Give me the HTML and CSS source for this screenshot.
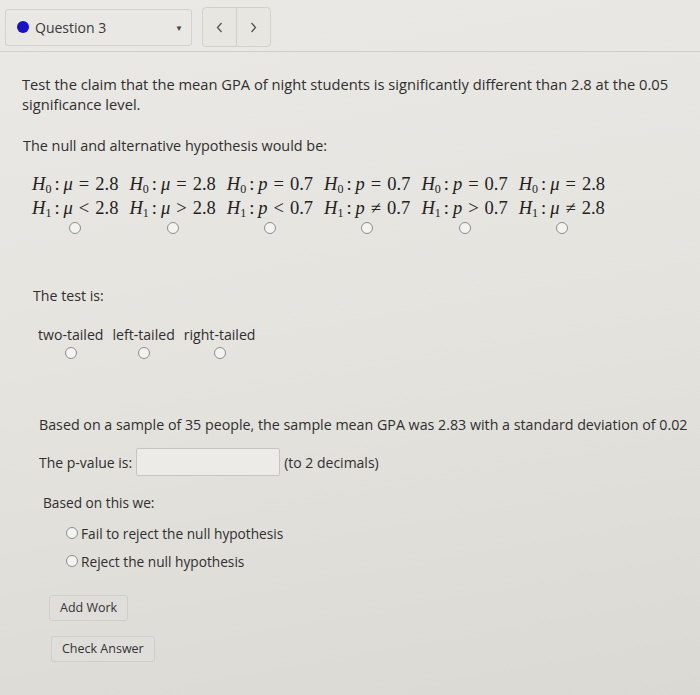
FILE: index.html
```html
<!DOCTYPE html>
<html>
<head>
<meta charset="utf-8">
<link rel="stylesheet" href="styles.css">
</head>
<body>
<div class="page">
  <div class="header">
    <div class="qselect">
      <span class="dot"></span>
      <span class="qlabel">Question 3</span>
      <span class="caret">&#9660;</span>
    </div>
    <div class="nav">
      <span class="navbtn"><svg width="7" height="11" viewBox="0 0 7 11"><path d="M5.5 1 L1.5 5.5 L5.5 10" fill="none" stroke="#555" stroke-width="1.3"/></svg></span>
      <span class="navbtn"><svg width="7" height="11" viewBox="0 0 7 11"><path d="M1.5 1 L5.5 5.5 L1.5 10" fill="none" stroke="#555" stroke-width="1.3"/></svg></span>
    </div>
  </div>

  <p class="claim">Test the claim that the mean GPA of night students is significantly different than 2.8 at the 0.05 significance level.</p>

  <p class="lead">The null and alternative hypothesis would be:</p>

  <div class="hyp">
    <div class="hcol">
      <div class="m"><i>H</i><sub>0</sub><span class="c">:</span><i>μ</i><span class="r">=</span>2.8</div>
      <div class="m"><i>H</i><sub>1</sub><span class="c">:</span><i>μ</i><span class="r">&lt;</span>2.8</div>
      <span class="radio"></span>
    </div>
    <div class="hcol">
      <div class="m"><i>H</i><sub>0</sub><span class="c">:</span><i>μ</i><span class="r">=</span>2.8</div>
      <div class="m"><i>H</i><sub>1</sub><span class="c">:</span><i>μ</i><span class="r">&gt;</span>2.8</div>
      <span class="radio"></span>
    </div>
    <div class="hcol">
      <div class="m"><i>H</i><sub>0</sub><span class="c">:</span><i>p</i><span class="r">=</span>0.7</div>
      <div class="m"><i>H</i><sub>1</sub><span class="c">:</span><i>p</i><span class="r">&lt;</span>0.7</div>
      <span class="radio"></span>
    </div>
    <div class="hcol">
      <div class="m"><i>H</i><sub>0</sub><span class="c">:</span><i>p</i><span class="r">=</span>0.7</div>
      <div class="m"><i>H</i><sub>1</sub><span class="c">:</span><i>p</i><span class="r">≠</span>0.7</div>
      <span class="radio"></span>
    </div>
    <div class="hcol">
      <div class="m"><i>H</i><sub>0</sub><span class="c">:</span><i>p</i><span class="r">=</span>0.7</div>
      <div class="m"><i>H</i><sub>1</sub><span class="c">:</span><i>p</i><span class="r">&gt;</span>0.7</div>
      <span class="radio"></span>
    </div>
    <div class="hcol">
      <div class="m"><i>H</i><sub>0</sub><span class="c">:</span><i>μ</i><span class="r">=</span>2.8</div>
      <div class="m"><i>H</i><sub>1</sub><span class="c">:</span><i>μ</i><span class="r">≠</span>2.8</div>
      <span class="radio"></span>
    </div>
  </div>

  <p class="testis">The test is:</p>

  <div class="tails">
    <div class="tcol"><span>two-tailed</span><span class="radio"></span></div>
    <div class="tcol"><span>left-tailed</span><span class="radio"></span></div>
    <div class="tcol"><span>right-tailed</span><span class="radio"></span></div>
  </div>

  <p class="sample">Based on a sample of 35 people, the sample mean GPA was 2.83 with a standard deviation of 0.02</p>

  <div class="pval">
    <span>The p-value is:</span>
    <span class="input"></span>
    <span>(to 2 decimals)</span>
  </div>

  <p class="based">Based on this we:</p>
  <div class="choices">
    <div class="choice"><span class="radio"></span><span>Fail to reject the null hypothesis</span></div>
    <div class="choice"><span class="radio"></span><span>Reject the null hypothesis</span></div>
  </div>

  <div class="btnrow"><span class="btn add">Add Work</span></div>
  <div class="btnrow"><span class="btn check">Check Answer</span></div>
</div>
</body>
</html>
```

FILE: styles.css
```css
html, body {
  margin: 0;
  padding: 0;
}
body {
  width: 700px;
  height: 695px;
  overflow: hidden;
  background: linear-gradient(170deg, #eae9e5 0%, #e4e3de 50%, #dad9d4 100%);
  font-family: "Open Sans", "Liberation Sans", sans-serif;
  color: #2f2f2f;
  font-size: 14px;
}
.header {
  display: flex;
  align-items: center;
  gap: 10px;
  padding: 7px 0 4px 5px;
  border-bottom: 1px solid #cfcec9;
}
.qselect {
  width: 187px;
  height: 37px;
  box-sizing: border-box;
  border: 1px solid #d2d1cc;
  border-radius: 3px;
  background: #e9e8e4;
  display: flex;
  align-items: center;
  padding-left: 11px;
  padding-right: 8px;
}
.dot {
  width: 12px;
  height: 12px;
  border-radius: 50%;
  background: #1a12c8;
  margin-right: 6px;
}
.qlabel {
  flex: 1;
  font-size: 14px;
  color: #3a3a3a;
  padding-top: 1px;
}
.caret {
  font-size: 8px;
  color: #444;
}
.nav {
  display: flex;
  height: 38px;
  border: 1px solid #d2d1cc;
  border-radius: 4px;
  background: #e7e6e1;
}
.navbtn {
  width: 33px;
  display: flex;
  align-items: center;
  justify-content: center;
}
.navbtn + .navbtn {
  border-left: 1px solid #cfcec9;
}
p {
  margin: 0;
}
.claim {
  margin: 22px 20px 0 22px;
  line-height: 20px;
  font-size: 14.7px;
}
.lead {
  margin: 22px 0 0 23px;
  font-size: 14.4px;
}
.hyp {
  display: flex;
  gap: 11px;
  margin: 17px 0 0 32px;
}
.hcol {
  display: flex;
  flex-direction: column;
  align-items: center;
}
.m {
  font-family: "Liberation Serif", "DejaVu Serif", serif;
  font-size: 18.5px;
  line-height: 24px;
  color: #222;
  white-space: nowrap;
  align-self: flex-start;
}
.m sub {
  font-size: 12px;
  vertical-align: -3px;
  line-height: 0;
}
.m .c {
  margin: 0 4px 0 3px;
}
.m .r {
  margin: 0 6px;
}
.radio {
  display: inline-block;
  width: 10px;
  height: 10px;
  border-radius: 50%;
  border: 1px solid #8d8d8d;
  background: #f3f3f1;
}
.hcol .radio {
  margin-top: 2px;
}
.testis {
  margin: 52px 0 0 33px;
  font-size: 14.2px;
}
.tails {
  display: flex;
  gap: 9px;
  margin: 20px 0 0 38px;
}
.tcol {
  display: flex;
  flex-direction: column;
  align-items: center;
  line-height: 20px;
  font-size: 14.1px;
}
.tcol .radio {
  margin-top: 2px;
}
.sample {
  margin: 56px 0 0 39px;
  white-space: nowrap;
  font-size: 14.25px;
}
.pval {
  display: flex;
  align-items: center;
  gap: 4px;
  margin: 14px 0 0 39px;
}
.input {
  display: inline-block;
  width: 142px;
  height: 26px;
  border: 1px solid #c6c5c0;
  background: #ecebe7;
  border-radius: 2px;
}
.based {
  margin: 17px 0 0 43px;
  font-size: 13.7px;
}
.choices {
  margin: 7px 0 0 66px;
  font-size: 13.7px;
}
.choice {
  display: flex;
  align-items: center;
  gap: 3px;
  height: 28px;
}
.btnrow {
  display: flex;
}
.btn {
  display: inline-block;
  font-size: 12.5px;
  color: #333;
  background: #dfdedb;
  border: 1px solid #cfceca;
  border-radius: 3px;
  padding: 3px 10px 4px 10px;
}
.add {
  margin: 20px 0 0 49px;
}
.check {
  margin: 15px 0 0 51px;
}
```
